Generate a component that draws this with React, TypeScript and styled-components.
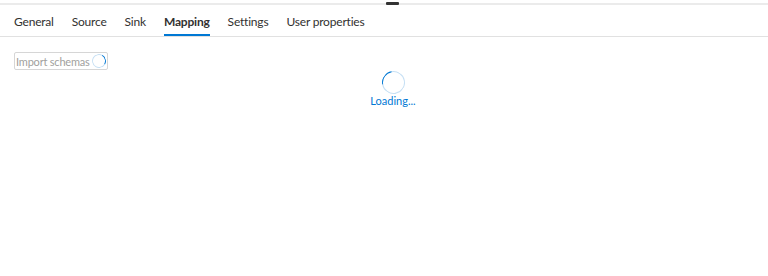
import styled, { createGlobalStyle } from 'styled-components';

const GlobalStyle = createGlobalStyle`
  html, body {
    margin: 0;
    padding: 0;
    background: #fff;
    font-family: Lato, 'Open Sans', sans-serif;
  }
`;

const tabs = ['General', 'Source', 'Sink', 'Mapping', 'Settings', 'User properties'];

function App() {
  return (
    <SPage>
      <GlobalStyle />
      <SSplitter>
        <SHandle />
      </SSplitter>
      <STabBar>
        {tabs.map((tab) => (
          <STab key={tab} $active={tab === 'Mapping'}>
            {tab}
          </STab>
        ))}
      </STabBar>
      <SContent>
        <SToolbar>
          <SImportButton disabled>
            Import schemas
            <SMiniSpinner />
          </SImportButton>
        </SToolbar>
        <SLoading>
          <SSpinner />
          <SLoadingText>Loading...</SLoadingText>
        </SLoading>
      </SContent>
    </SPage>
  );
}

const SPage = styled.div`
  width: 768px;
  height: 276px;
  background: #fff;
  overflow: hidden;
`;

const SSplitter = styled.div`
  position: relative;
  height: 5px;
  border-bottom: 2px solid #ebebeb;
  box-sizing: border-box;
`;

const SHandle = styled.div`
  position: absolute;
  left: 386px;
  top: 2px;
  width: 13px;
  height: 3px;
  background: #333;
  border-radius: 1px;
`;

const STabBar = styled.div`
  display: flex;
  gap: 18px;
  padding: 0 14px;
  height: 31px;
  border-bottom: 1px solid #e1e1e1;
`;

const STab = styled.div<{ $active: boolean }>`
  display: flex;
  align-items: center;
  height: 100%;
  box-sizing: border-box;
  padding-top: 4px;
  font-size: 12px;
  letter-spacing: -0.2px;
  color: #323130;
  font-weight: ${(p) => (p.$active ? 700 : 400)};
  border-bottom: 2px solid ${(p) => (p.$active ? '#0078d4' : 'transparent')};
`;

const SContent = styled.div`
  padding: 15px 14px 0;
`;

const SToolbar = styled.div`
  display: flex;
`;

const SImportButton = styled.button`
  display: flex;
  align-items: center;
  gap: 2px;
  height: 18px;
  padding: 0 1px 0 1px;
  border: 1px solid #d6d6d6;
  border-radius: 2px;
  background: #fff;
  font-family: inherit;
  font-size: 11px;
  letter-spacing: -0.2px;
  color: #a19f9d;
`;

const SMiniSpinner = styled.span`
  width: 14px;
  height: 14px;
  border-radius: 50%;
  border: 1.5px solid #c7e0f4;
  border-right-color: #0078d4;
  box-sizing: border-box;
  transform: rotate(-15deg);
`;

const SLoading = styled.div`
  display: flex;
  flex-direction: column;
  align-items: center;
  margin-top: 1px;
  padding-left: 18px;
`;

const SSpinner = styled.div`
  width: 23px;
  height: 23px;
  box-sizing: border-box;
  border-radius: 50%;
  border: 1.5px solid #c7e0f4;
  border-left-color: #0078d4;
  transform: rotate(35deg);
`;

const SLoadingText = styled.div`
  font-size: 11px;
  color: #0078d4;
`;

export default App;
